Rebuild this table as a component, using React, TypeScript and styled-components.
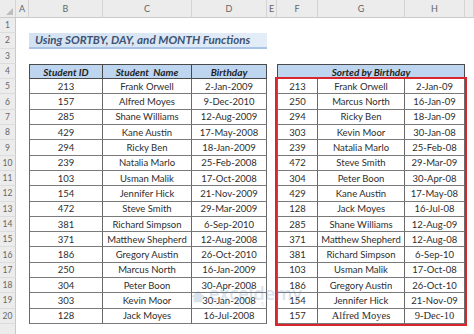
import React from 'react';
import styled, { createGlobalStyle } from 'styled-components';

const GlobalStyle = createGlobalStyle`
  html, body {
    margin: 0;
    padding: 0;
    background: #ffffff;
  }
  body {
    width: 474px;
    height: 334px;
    overflow: hidden;
    font-family: "Lato", "Open Sans", sans-serif;
  }
`;

const COLS = [16, 13, 74, 89, 75, 10, 41, 87, 60];
const LETTERS = ['A', 'B', 'C', 'D', 'E', 'F', 'G', 'H', 'I'];
const ROW_H = 15.3;

const Sheet = styled.div`
  position: relative;
  display: grid;
  grid-template-columns: ${COLS.map((c) => `${c}px`).join(' ')} 1fr;
  grid-template-rows: 18px repeat(21, ${ROW_H}px);
  width: 474px;
  height: 334px;
  overflow: hidden;
  background: #ffffff;
`;

const Corner = styled.div`
  grid-column: 1;
  grid-row: 1;
  position: relative;
  background: #ececec;
  border-right: 1px solid #d4d4d4;
  border-bottom: 1px solid #c9c9c9;
  &::after {
    content: '';
    position: absolute;
    right: 2px;
    bottom: 2px;
    width: 0;
    height: 0;
    border-left: 7px solid transparent;
    border-bottom: 7px solid #bdbdbd;
  }
`;

const ColHead = styled.div<{ $col: number }>`
  grid-column: ${(p) => p.$col};
  grid-row: 1;
  display: flex;
  align-items: center;
  justify-content: center;
  background: #ececec;
  border-right: 1px solid #d4d4d4;
  border-bottom: 1px solid #c9c9c9;
  font-size: 9px;
  color: #666666;
`;

const RowHead = styled.div<{ $row: number }>`
  grid-column: 1;
  grid-row: ${(p) => p.$row};
  display: flex;
  align-items: center;
  justify-content: center;
  background: #ececec;
  border-right: 1px solid #c9c9c9;
  border-bottom: 1px solid #dcdcdc;
  font-size: 8.5px;
  color: #666666;
`;

const Title = styled.div`
  grid-column: 3 / 6;
  grid-row: 3;
  display: flex;
  align-items: center;
  padding-left: 6px;
  background: linear-gradient(90deg, #d3e2f2 0%, #dce8f5 60%, #e3edf8 100%);
  border-bottom: 2px solid #a9c4e4;
  font-size: 11.6px;
  font-weight: 700;
  font-style: italic;
  color: #3f5372;
  white-space: nowrap;
`;

const Table = styled.div<{ $start: number; $widths: number[] }>`
  grid-column: ${(p) => `${p.$start} / ${p.$start + 3}`};
  grid-row: 5 / 22;
  display: grid;
  grid-template-columns: ${(p) => p.$widths.map((w) => `${w}px`).join(' ')};
  grid-template-rows: ${ROW_H}px 1fr;
  position: relative;
`;

const HeadCell = styled.div<{ $span?: number }>`
  grid-column: span ${(p) => p.$span || 1};
  display: flex;
  align-items: center;
  justify-content: center;
  background: #bdd5ee;
  border: 1px solid #4a4a4a;
  border-left-width: 0;
  &:first-child {
    border-left-width: 1px;
  }
  font-size: 10px;
  font-weight: 700;
  font-style: italic;
  color: #1f1f1f;
  white-space: nowrap;
`;

const Body = styled.div<{ $marked?: boolean }>`
  grid-column: 1 / 4;
  display: grid;
  grid-template-columns: subgrid;
  grid-auto-rows: ${ROW_H}px;
  border-left: 1px solid #6a6a6a;
  outline: ${(p) => (p.$marked ? '2px solid #d8262e' : 'none')};
  outline-offset: 0;
`;

const Cell = styled.div<{ $serif?: boolean }>`
  display: flex;
  align-items: center;
  justify-content: center;
  border-right: 1px solid #6a6a6a;
  border-bottom: 1px solid #7a7a7a;
  font-family: ${(p) =>
    p.$serif ? '"Liberation Serif", serif' : '"Lato", "Open Sans", sans-serif'};
  font-size: ${(p) => (p.$serif ? '10.5px' : '9.5px')};
  color: #2e2e2e;
  white-space: nowrap;
`;

const Watermark = styled.div`
  position: absolute;
  left: 190px;
  top: 284px;
  display: flex;
  align-items: center;
  gap: 3px;
  opacity: 0.22;
  pointer-events: none;
`;

const MarkText = styled.div`
  display: flex;
  flex-direction: column;
  line-height: 1;
`;

const MarkName = styled.span`
  font-family: "Open Sans", sans-serif;
  font-size: 18px;
  font-weight: 600;
  color: #5a7fae;
`;

const MarkTag = styled.span`
  font-family: "Open Sans", sans-serif;
  font-size: 5px;
  letter-spacing: 1px;
  color: #5a7fae;
  padding-left: 2px;
`;

const students: [string, string, string][] = [
  ['213', 'Frank Orwell', '2-Jan-2009'],
  ['157', 'Alfred Moyes', '9-Dec-2010'],
  ['285', 'Shane Williams', '12-Aug-2009'],
  ['429', 'Kane Austin', '17-May-2008'],
  ['294', 'Ricky Ben', '18-Jan-2009'],
  ['239', 'Natalia Marlo', '25-Feb-2008'],
  ['103', 'Usman Malik', '17-Oct-2008'],
  ['154', 'Jennifer Hick', '21-Nov-2009'],
  ['472', 'Steve Smith', '29-Mar-2009'],
  ['381', 'Richard Simpson', '6-Sep-2010'],
  ['371', 'Matthew Shepherd', '12-Aug-2008'],
  ['186', 'Gregory Austin', '26-Oct-2010'],
  ['250', 'Marcus North', '16-Jan-2009'],
  ['304', 'Peter Boon', '30-Apr-2008'],
  ['303', 'Kevin Moor', '30-Jan-2008'],
  ['128', 'Jack Moyes', '16-Jul-2008'],
];

const sorted: [string, string, string][] = [
  ['213', 'Frank Orwell', '2-Jan-09'],
  ['250', 'Marcus North', '16-Jan-09'],
  ['294', 'Ricky Ben', '18-Jan-09'],
  ['303', 'Kevin Moor', '30-Jan-08'],
  ['239', 'Natalia Marlo', '25-Feb-08'],
  ['472', 'Steve Smith', '29-Mar-09'],
  ['304', 'Peter Boon', '30-Apr-08'],
  ['429', 'Kane Austin', '17-May-08'],
  ['128', 'Jack Moyes', '16-Jul-08'],
  ['285', 'Shane Williams', '12-Aug-09'],
  ['371', 'Matthew Shepherd', '12-Aug-08'],
  ['381', 'Richard Simpson', '6-Sep-10'],
  ['103', 'Usman Malik', '17-Oct-08'],
  ['186', 'Gregory Austin', '26-Oct-10'],
  ['154', 'Jennifer Hick', '21-Nov-09'],
  ['157', 'Alfred Moyes', '9-Dec-10'],
];

const App: React.FC = () => {
  return (
    <>
      <GlobalStyle />
      <Sheet>
        <Corner />
        {LETTERS.map((l, i) => (
          <ColHead key={l} $col={i + 2}>
            {i === 8 ? '' : l}
          </ColHead>
        ))}
        {Array.from({ length: 21 }, (_, i) => (
          <RowHead key={i} $row={i + 2}>
            {i < 20 ? i + 1 : ''}
          </RowHead>
        ))}

        <Title>Using SORTBY, DAY, and MONTH Functions</Title>

        <Table $start={3} $widths={[74, 89, 75]}>
          <HeadCell>Student ID</HeadCell>
          <HeadCell>Student&nbsp; Name</HeadCell>
          <HeadCell>Birthday</HeadCell>
          <Body>
            {students.map((r) =>
              r.map((v, j) => <Cell key={r[0] + j}>{v}</Cell>)
            )}
          </Body>
        </Table>

        <Table $start={7} $widths={[41, 87, 60]}>
          <HeadCell $span={3}>Sorted by Birthday</HeadCell>
          <Body $marked>
            {sorted.map((r, i) =>
              r.map((v, j) => (
                <Cell key={r[0] + j} $serif={i === sorted.length - 1 && j > 0}>
                  {v}
                </Cell>
              ))
            )}
          </Body>
        </Table>

        <Watermark>
          <svg width="16" height="14" viewBox="0 0 18 16">
            <path d="M1 9 L9 2 L17 9 L14 9 L14 15 L4 15 L4 9 Z" fill="#5a7fae" />
          </svg>
          <MarkText>
            <MarkName>exceldemy</MarkName>
            <MarkTag>EXCEL · DATA · BI</MarkTag>
          </MarkText>
        </Watermark>
      </Sheet>
    </>
  );
};

export default App;
